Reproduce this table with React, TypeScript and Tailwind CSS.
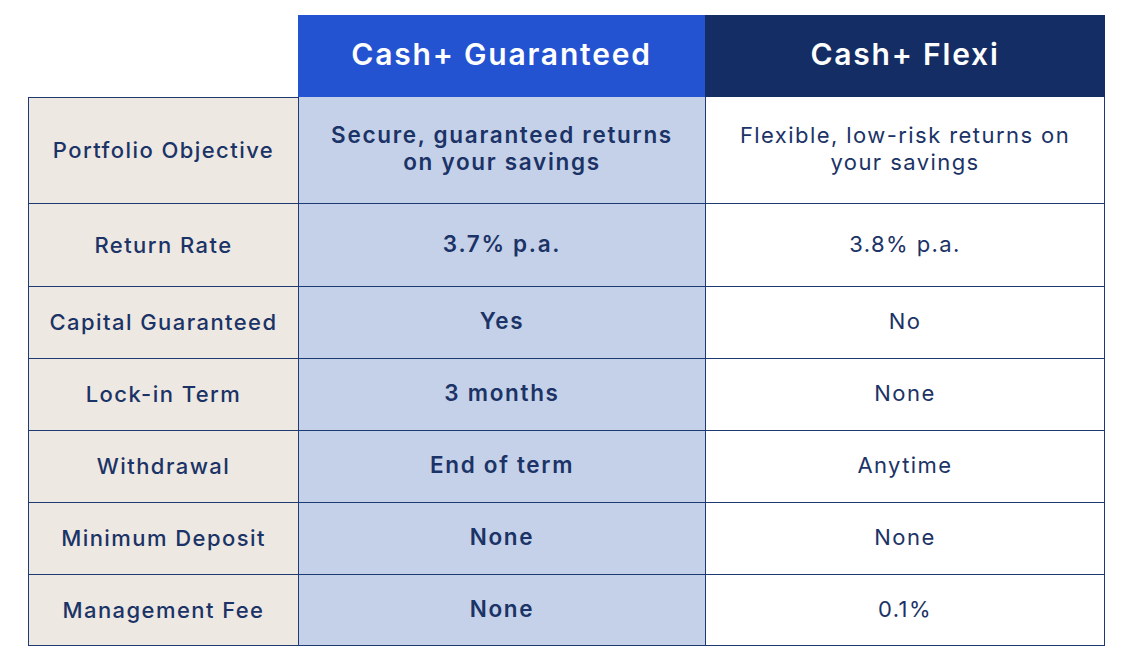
const rows = [
  { label: "Portfolio Objective", a: ["Secure, guaranteed returns", "on your savings"], b: ["Flexible, low-risk returns on", "your savings"], h: "h-[107px]" },
  { label: "Return Rate", a: ["3.7% p.a."], b: ["3.8% p.a."], h: "h-[83px]" },
  { label: "Capital Guaranteed", a: ["Yes"], b: ["No"], h: "h-[72px]" },
  { label: "Lock-in Term", a: ["3 months"], b: ["None"], h: "h-[72px]" },
  { label: "Withdrawal", a: ["End of term"], b: ["Anytime"], h: "h-[72px]" },
  { label: "Minimum Deposit", a: ["None"], b: ["None"], h: "h-[72px]" },
  { label: "Management Fee", a: ["None"], b: ["0.1%"], h: "h-[71px]" },
];

export default function App() {
  return (
    <div className="w-[1127px] h-[666px] bg-white pt-[15px] pl-[28px] text-[#1b3366]" style={{ fontFamily: "Inter, 'Noto Sans', sans-serif" }}>
      <div className="grid grid-cols-[270px_407px_400px] w-[1077px]">
        <div />
        <div className="h-[82px] bg-[#2353d1] flex items-center justify-center text-white text-[30px] font-semibold tracking-[0.06em] pb-1">
          Cash+ Guaranteed
        </div>
        <div className="h-[82px] bg-[#142d64] flex items-center justify-center text-white text-[30px] font-semibold tracking-[0.06em] pb-1">
          Cash+ Flexi
        </div>
        {rows.map((row, i) => (
          <div key={row.label} className="contents">
            <div className={`${row.h} bg-[#ede8e2] border-l-[1.5px] border-b-[1.5px] border-[#1e3a70] ${i === 0 ? "border-t-[1.5px]" : ""} flex items-center justify-center text-[22px] font-medium tracking-[0.065em]`}>
              {row.label}
            </div>
            <div className={`${row.h} bg-[#c5d1e8] border-l-[1.5px] border-b-[1.5px] border-[#1e3a70] flex flex-col items-center justify-center text-center text-[22.5px] font-semibold leading-[27px] tracking-[0.075em] pb-1`}>
              {row.a.map((line) => (
                <span key={line}>{line}</span>
              ))}
            </div>
            <div className={`${row.h} bg-white border-l-[1.5px] border-r-[1.5px] border-b-[1.5px] border-[#1e3a70] flex flex-col items-center justify-center text-center text-[22px] leading-[27px] tracking-[0.065em] pb-0.5`}>
              {row.b.map((line) => (
                <span key={line}>{line}</span>
              ))}
            </div>
          </div>
        ))}
      </div>
    </div>
  );
}
